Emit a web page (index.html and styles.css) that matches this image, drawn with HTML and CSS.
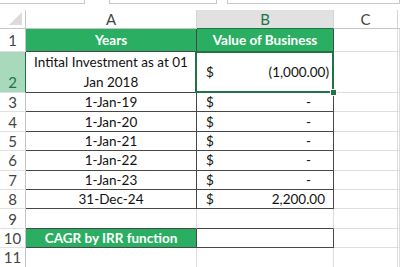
FILE: index.html
```html
<!DOCTYPE html>
<html>
<head>
<meta charset="utf-8">
<link rel="stylesheet" href="styles.css">
</head>
<body>
<div class="app">
  <div class="topbar">
    <div class="tb-box tb-name"></div>
    <div class="tb-box tb-mid"></div>
    <div class="tb-box tb-formula"></div>
  </div>
  <div class="sheet">
    <div class="corner"><span class="tri"></span></div>
    <div class="colh">A</div>
    <div class="colh colh-sel">B</div>
    <div class="colh">C</div>
    <div class="colh colh-x"></div>

    <div class="rowh">1</div>
    <div class="cell green bd">Years</div>
    <div class="cell green bd">Value of Business</div>
    <div class="cell"></div>
    <div class="cell"></div>

    <div class="rowh rowh-sel">2</div>
    <div class="cell bd wrap">Intital Investment as at 01<br>Jan 2018</div>
    <div class="cell bd acct selected"><span>$</span><span>(1,000.00)</span></div>
    <div class="cell"></div>
    <div class="cell"></div>

    <div class="rowh">3</div>
    <div class="cell bd">1-Jan-19</div>
    <div class="cell bd acct"><span>$</span><span class="dash">-</span></div>
    <div class="cell"></div>
    <div class="cell"></div>

    <div class="rowh">4</div>
    <div class="cell bd">1-Jan-20</div>
    <div class="cell bd acct"><span>$</span><span class="dash">-</span></div>
    <div class="cell"></div>
    <div class="cell"></div>

    <div class="rowh">5</div>
    <div class="cell bd">1-Jan-21</div>
    <div class="cell bd acct"><span>$</span><span class="dash">-</span></div>
    <div class="cell"></div>
    <div class="cell"></div>

    <div class="rowh">6</div>
    <div class="cell bd">1-Jan-22</div>
    <div class="cell bd acct"><span>$</span><span class="dash">-</span></div>
    <div class="cell"></div>
    <div class="cell"></div>

    <div class="rowh">7</div>
    <div class="cell bd">1-Jan-23</div>
    <div class="cell bd acct"><span>$</span><span class="dash">-</span></div>
    <div class="cell"></div>
    <div class="cell"></div>

    <div class="rowh">8</div>
    <div class="cell bd">31-Dec-24</div>
    <div class="cell bd acct"><span>$</span><span class="pos">2,200.00</span></div>
    <div class="cell"></div>
    <div class="cell"></div>

    <div class="rowh">9</div>
    <div class="cell bb"></div>
    <div class="cell bb"></div>
    <div class="cell"></div>
    <div class="cell"></div>

    <div class="rowh">10</div>
    <div class="cell green bd">CAGR by IRR function</div>
    <div class="cell bd"></div>
    <div class="cell"></div>
    <div class="cell"></div>

    <div class="rowh">11</div>
    <div class="cell"></div>
    <div class="cell"></div>
    <div class="cell"></div>
    <div class="cell"></div>
  </div>
</div>
</body>
</html>
```
FILE: styles.css
```css
html, body {
  margin: 0;
  padding: 0;
  background: #ffffff;
}
body {
  font-family: Lato, "Open Sans", sans-serif;
  font-size: 13.5px;
  color: #111111;
}
.app {
  width: 400px;
  height: 267px;
  overflow: hidden;
}
.topbar {
  height: 10px;
  display: flex;
}
.tb-box {
  height: 4px;
  border-bottom: 1px solid #c8c8c8;
  border-right: 1px solid #c8c8c8;
  box-sizing: border-box;
}
.tb-name { width: 89px; }
.tb-mid { width: 113px; margin-left: 24px; border-left: 1px solid #c8c8c8; }
.tb-formula { width: 181px; margin-left: 10px; border-left: 1px solid #c8c8c8; }

.sheet {
  display: grid;
  grid-template-columns: 26px 171px 137px 64px 2px;
  grid-template-rows: 19px 23px 41px repeat(9, 19.4px);
}
.sheet > div {
  box-sizing: border-box;
}
.corner {
  border-right: 1px solid #c6c6c6;
  border-bottom: 1px solid #c6c6c6;
  position: relative;
}
.tri {
  position: absolute;
  right: 3px;
  bottom: 3px;
  width: 0;
  height: 0;
  border-left: 13px solid transparent;
  border-bottom: 13px solid #dcdcdc;
}
.colh {
  display: flex;
  align-items: center;
  justify-content: center;
  color: #444;
  font-size: 15px;
  border-right: 1px solid #d4d4d4;
  border-bottom: 1px solid #c6c6c6;
  background: #ffffff;
}
.colh-sel {
  background: #e1e1e1;
  color: #217346;
  border-bottom: 1px solid #217346;
}
.colh-x { border-right: none; }
.rowh {
  display: flex;
  align-items: center;
  justify-content: center;
  color: #444;
  font-size: 15px;
  border-right: 1px solid #c6c6c6;
  border-bottom: 1px solid #e1e1e1;
}
.rowh-sel {
  background: #a8d9ba;
  color: #217346;
  align-items: flex-end;
  padding-bottom: 1px;
  border-right: 1px solid #217346;
}
.cell {
  display: flex;
  align-items: center;
  justify-content: center;
  border-right: 1px solid #dedede;
  border-bottom: 1px solid #dedede;
  white-space: nowrap;
}
.bd {
  border-right: 1px solid #474747;
  border-bottom: 1px solid #474747;
}
.bb {
  border-bottom: 1px solid #474747;
}
.green {
  background: #2aaf62;
  color: #ffffff;
  font-weight: bold;
}
.wrap {
  text-align: center;
  line-height: 20px;
  white-space: normal;
}
.acct {
  justify-content: space-between;
  padding: 0 4px 0 9px;
}
.pos { padding-right: 4px; }
.dash { padding-right: 18px; }
.selected {
  position: relative;
}
.selected::after {
  content: "";
  position: absolute;
  left: -2px;
  top: -1px;
  right: -1px;
  bottom: -1px;
  border: 2px solid #217346;
}
.selected::before {
  content: "";
  position: absolute;
  right: -4px;
  bottom: -4px;
  width: 5px;
  height: 5px;
  background: #217346;
  border: 1px solid #ffffff;
  z-index: 2;
}
```
